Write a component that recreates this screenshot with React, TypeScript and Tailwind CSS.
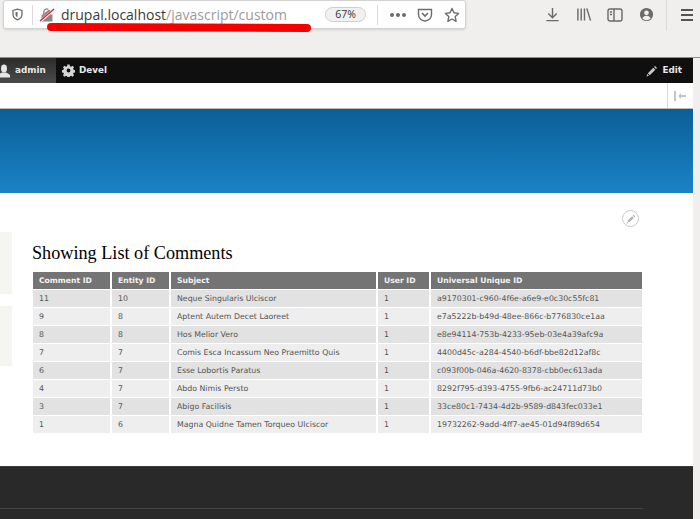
import React from "react";

const rows = [
  ["11", "10", "Neque Singularis Ulciscor", "1", "a9170301-c960-4f6e-a6e9-e0c30c55fc81"],
  ["9", "8", "Aptent Autem Decet Laoreet", "1", "e7a5222b-b49d-48ee-866c-b776830ce1aa"],
  ["8", "8", "Hos Melior Vero", "1", "e8e94114-753b-4233-95eb-03e4a39afc9a"],
  ["7", "7", "Comis Esca Incassum Neo Praemitto Quis", "1", "4400d45c-a284-4540-b6df-bbe82d12af8c"],
  ["6", "7", "Esse Lobortis Paratus", "1", "c093f00b-046a-4620-8378-cbb0ec613ada"],
  ["4", "7", "Abdo Nimis Persto", "1", "8292f795-d393-4755-9fb6-ac24711d73b0"],
  ["3", "7", "Abigo Facilisis", "1", "33ce80c1-7434-4d2b-9589-d843fec033e1"],
  ["1", "6", "Magna Quidne Tamen Torqueo Ulciscor", "1", "19732262-9add-4ff7-ae45-01d94f89d654"],
];
const headers = ["Comment ID", "Entity ID", "Subject", "User ID", "Universal Unique ID"];
const widths = ["w-[77px]", "w-[57px]", "w-[205px]", "w-[51px]", "w-[211px]"];

export default function App() {
  return (
    <div className="relative h-[519px] w-[700px] overflow-hidden bg-[#f1efee] font-['DejaVu_Sans',sans-serif]">
      {/* Browser chrome */}
      <div className="flex h-[58px] items-start border-b border-[#8f8f8d] pl-[3px]">
        <div className="relative flex h-[29px] w-[463px] items-center rounded-[3px] border border-[#d5d3d1] bg-white font-['Open_Sans',sans-serif] shadow-sm">
          <svg viewBox="0 0 16 16" className="ml-[7px] h-[13px] w-[13px]" fill="none" stroke="#6a6a6a" strokeWidth="1.6">
            <path d="M8 1.500 2.500 3v5c0 3 2.500 5.300 5.500 6.500 3-1.200 5.500-3.500 5.500-6.500V3z" />
            <path d="M8 4.500 5.500 5.300V8c0 1.500 1.200 2.700 2.500 3.500z" fill="#6a6a6a" stroke="none" />
          </svg>
          <div className="ml-[8px] h-[20px] w-px bg-[#dcdad8]" />
          <svg viewBox="0 0 16 16" className="ml-[6px] h-[16px] w-[16px]">
            <path d="M2.500 14.500V8.500L10 2.500a3 3 0 0 1 1.800 2.500V7.500h1.700v7z" fill="#8a8a8a" />
            <path d="M4.800 7V5a3 3 0 0 1 4.500-2.600" fill="none" stroke="#8a8a8a" strokeWidth="1.300" />
            <path d="M1 14.500 15 2.500" stroke="#ffffff" strokeWidth="2.600" />
            <path d="M1 14 15 2" stroke="#ee1a3a" strokeWidth="1.400" />
          </svg>
          <div className="ml-[6px] text-[14px] leading-none text-[#3b3b3b]">
            drupal.localhost<span className="text-[#9b9b9b]">/javascript/custom</span>
          </div>
          <div className="ml-auto flex items-center">
            <div className="mr-[11px] flex h-[15px] w-[41px] items-center justify-center rounded-full border border-[#cfcfcf] bg-[#f1f1f1] text-[10.500px] text-[#333]">67%</div>
            <div className="h-[20px] w-px bg-[#dcdad8]" />
            <div className="ml-[12px] flex gap-[2px]">
              <span className="h-[4px] w-[4px] rounded-full bg-[#6c6c6c]" />
              <span className="h-[4px] w-[4px] rounded-full bg-[#6c6c6c]" />
              <span className="h-[4px] w-[4px] rounded-full bg-[#6c6c6c]" />
            </div>
            <svg viewBox="0 0 16 16" className="ml-[11px] h-[16px] w-[16px]" fill="none" stroke="#6c6c6c" strokeWidth="1.400">
              <path d="M1.500 2.500h13v5a6.500 6.500 0 0 1-13 0z" />
              <path d="m5 6 3 3 3-3" strokeWidth="1.600" />
            </svg>
            <svg viewBox="0 0 16 16" className="ml-[11px] mr-[5px] h-[16px] w-[16px]" fill="none" stroke="#6c6c6c" strokeWidth="1.400">
              <path d="m8 1.500 2 4.300 4.600.6-3.400 3.200.9 4.700L8 12l-4.100 2.300.9-4.700L1.400 6.400 6 5.800z" strokeLinejoin="round" />
            </svg>
          </div>
        </div>
        <div className="ml-[79px] flex h-[29px] items-center">
          <svg viewBox="0 0 16 16" className="h-[15px] w-[15px]" fill="none" stroke="#6a6a6a" strokeWidth="1.500">
            <path d="M8 1v10M3.500 7 8 11.500 12.500 7M1.500 14.500h13" />
          </svg>
          <svg viewBox="0 0 16 16" className="ml-[16px] h-[15px] w-[16px]" fill="none" stroke="#6a6a6a" strokeWidth="1.500">
            <path d="M1.500 1.500v13M5 1.500v13M8.500 1.500v13M11 1.500l4 13" />
          </svg>
          <svg viewBox="0 0 16 16" className="ml-[15px] h-[16px] w-[16px]" fill="none" stroke="#6a6a6a" strokeWidth="1.400">
            <rect x="1" y="2" width="14" height="12" rx="2" />
            <path d="M7 2v12M3 5h2M3 7.500h2" />
          </svg>
          <svg viewBox="0 0 16 16" className="ml-[16px] h-[15px] w-[15px]">
            <circle cx="8" cy="8" r="7" fill="#6a6a6a" />
            <circle cx="8" cy="6.200" r="2.500" fill="#f1efee" />
            <path d="M3.500 12c1-2 2.800-2.800 4.500-2.800s3.500.8 4.500 2.800C11 13.500 9.500 14 8 14s-3-.5-4.500-2z" fill="#f1efee" />
          </svg>
          <div className="ml-[12px] h-[31px] w-px self-start bg-[#dddbd9]" />
          <div className="ml-[14px] flex w-[12px] flex-col gap-[3px]">
            <span className="h-[2px] bg-[#555]" />
            <span className="h-[2px] bg-[#555]" />
            <span className="h-[2px] bg-[#555]" />
          </div>
        </div>
      </div>

      <svg className="absolute left-[47px] top-[22px]" width="266" height="11" viewBox="0 0 266 11">
        <path d="M4 5 C80 6 180 5 260 6" stroke="#f40000" strokeWidth="8" strokeLinecap="round" fill="none" />
      </svg>

      {/* Page */}
      <div className="w-[693px] bg-white">
        {/* Toolbar */}
        <div className="flex h-[25px] items-center bg-[#0f0f0f] text-[8.800px] font-bold text-[#e8e8e8]">
          <div className="flex h-full w-[56px] items-center bg-gradient-to-b from-[#2c2c2c] to-[#4a4a4a]">
            <svg viewBox="0 0 12 13" className="ml-[-2px] h-[14px] w-[12px]" fill="#e6e6e6">
              <ellipse cx="6" cy="4" rx="3" ry="4" />
              <path d="M0 13v-2c0-1.500 3-2.500 4-3h4c1 .5 4 1.500 4 3v2z" />
            </svg>
            <span className="ml-[5px]">admin</span>
          </div>
          <svg viewBox="0 0 24 24" className="ml-[6px] h-[13px] w-[13px]" fill="#d6d6d6">
            <path d="M10 1h4l.6 3 2.200.9 2.600-1.700 2.800 2.800-1.700 2.600.9 2.200 3 .6v4l-3 .6-.9 2.200 1.700 2.600-2.800 2.800-2.600-1.700-2.200.9-.6 2.200h-4l-.6-2.200-2.200-.9-2.600 1.700-2.800-2.800 1.700-2.600-.9-2.200-3-.6v-4l3-.6.9-2.200L1.800 6l2.800-2.800 2.600 1.700L9.400 4zM12 8.500a3.500 3.500 0 1 0 0 7 3.500 3.500 0 0 0 0-7z" fillRule="evenodd" />
          </svg>
          <span className="ml-[4px]">Devel</span>
          <svg viewBox="0 0 12 12" className="ml-auto h-[12px] w-[12px]" fill="#c9c9c9">
            <path d="M9 1l2 2-1 1-2-2zM7.300 2.700l2 2-5.500 5.500-2-2zM1.200 9 3 10.800l-2.500.7z" />
          </svg>
          <span className="ml-[4px] mr-[11px]">Edit</span>
        </div>
        {/* Tray */}
        <div className="flex h-[26px] justify-end border-b border-[#bdbdbd] bg-white">
          <div className="flex w-[26px] items-center justify-center gap-[2px] border-l border-[#d8d8d8] pr-[2px]">
            <span className="h-[10px] w-[2px] bg-[#c4c4c4]" />
            <svg viewBox="0 0 8 6" className="h-[6px] w-[8px]" fill="#c4c4c4">
              <path d="M0 3 3 0v2h5v2H3v2z" />
            </svg>
          </div>
        </div>
        {/* Header band */}
        <div className="h-[84px] bg-gradient-to-b from-[#0b5f97] to-[#1b83c7]" />
        {/* Content */}
        <div className="relative h-[273px] bg-white">
          <div className="absolute left-0 top-[39px] h-[62px] w-[12px] bg-[#f5f5f2]" />
          <div className="absolute left-0 top-[113px] h-[60px] w-[12px] bg-[#f5f5f2]" />
          <div className="absolute left-[622px] top-[17px] flex h-[17px] w-[17px] items-center justify-center rounded-full border border-[#c9c9c9] bg-white">
            <svg viewBox="0 0 12 12" className="h-[10px] w-[10px]" fill="#b3b3b3">
              <path d="M9 1l2 2-1 1-2-2zM7.300 2.700l2 2-5.500 5.500-2-2zM1.200 9 3 10.800l-2.500.7z" />
            </svg>
          </div>
          <div className="pl-[32px] pt-[49px]">
            <h1 className="font-['Liberation_Serif',serif] text-[18.200px] leading-[22px] text-black">Showing List of Comments</h1>
            <div className="mt-[8px] flex w-[611px] flex-col text-[7.820px]">
              <div className="flex h-[17px] items-stretch gap-[2px] pl-px text-[7.650px] font-bold text-[#f2f2f2]">
                {headers.map((h, i) => (
                  <div key={h} className={`${widths[i]} flex items-center bg-[#747474] pl-[6px]`}>
                    {h}
                  </div>
                ))}
              </div>
              {rows.map((r, idx) => (
                <div key={r[4]} className="mt-px flex h-[17px] items-stretch gap-[2px] pl-px text-[#555555]">
                  {r.map((c, i) => (
                    <div key={i} className={`${widths[i]} flex items-center pl-[6px] ${idx % 2 === 0 ? "bg-[#e2e2e2]" : "bg-[#eeeeee]"}`}>
                      {c}
                    </div>
                  ))}
                </div>
              ))}
            </div>
          </div>
        </div>
        {/* Footer */}
        <div className="h-[53px] border-t border-[#3a3a3a] bg-[#292929] pt-[41px]">
          <div className="h-px w-[643px] bg-[#444444]" />
        </div>
      </div>
    </div>
  );
}
